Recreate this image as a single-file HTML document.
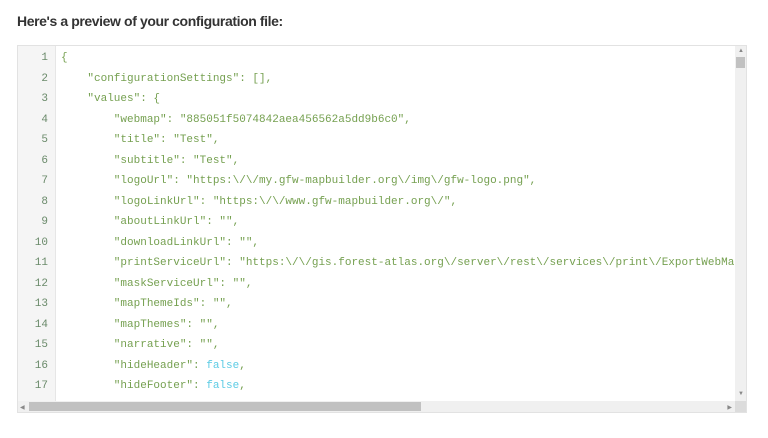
<!DOCTYPE html>
<html><head><style>
body{margin:0;width:768px;height:438px;background:#fff;overflow:hidden;font-family:"Liberation Sans",sans-serif}
h1{position:absolute;left:17px;top:13px;margin:0;font-size:14px;font-weight:bold;color:#333;letter-spacing:-0.4px}
.box{position:absolute;left:17px;top:45px;width:730px;height:368px;border:1px solid #e2e2e2;box-sizing:border-box;overflow:hidden;background:#fff}
.gut{position:absolute;left:0;top:0;width:37px;height:100%;background:#f5f5f5;border-right:1px solid #e6e6e6}
.ln{position:absolute;left:0;width:30px;text-align:right;font-family:"Liberation Mono",monospace;font-size:11px;color:#6a8a6a}
.cd{position:absolute;left:43px;white-space:pre;font-family:"Liberation Mono",monospace;font-size:11px;color:#75a050}
.b{color:#5ccbe4}
.vs{position:absolute;right:0;top:0;width:11px;height:356px;background:#f0f0f0}
.vt{position:absolute;right:1px;top:11px;width:9px;height:11px;background:#c1c1c1}
.hs{position:absolute;left:0;bottom:0;width:718px;height:11px;background:#f0f0f0}
.ht{position:absolute;left:11px;bottom:1px;width:392px;height:9px;background:#c1c1c1}
.cor{position:absolute;right:0;bottom:0;width:11px;height:11px;background:#dcdcdc}
.ar{position:absolute;font-size:6px;color:#888}
</style></head><body>
<h1>Here's a preview of your configuration file:</h1>
<div class="box">
<div class="gut"></div>
<div id="c"></div>
<div class="vs"></div><div class="vt"></div>
<div class="hs"></div><div class="ht"></div><div class="cor"></div>
<div class="ar" style="right:2px;top:2px">▲</div>
<div class="ar" style="right:2px;top:345px">▼</div>
<div class="ar" style="left:2px;bottom:1px">◀</div>
<div class="ar" style="right:14px;bottom:1px">▶</div>
</div>
<script>
var L=['{','    "configurationSettings": [],','    "values": {','        "webmap": "885051f5074842aea456562a5dd9b6c0",','        "title": "Test",','        "subtitle": "Test",','        "logoUrl": "https:\\/\\/my.gfw-mapbuilder.org\\/img\\/gfw-logo.png",','        "logoLinkUrl": "https:\\/\\/www.gfw-mapbuilder.org\\/",','        "aboutLinkUrl": "",','        "downloadLinkUrl": "",','        "printServiceUrl": "https:\\/\\/gis.forest-atlas.org\\/server\\/rest\\/services\\/print\\/ExportWebMap",','        "maskServiceUrl": "",','        "mapThemeIds": "",','        "mapThemes": "",','        "narrative": "",','        "hideHeader": <b>false</b>,','        "hideFooter": <b>false</b>,','        "includeMyGFWLogin": <b>false</b>,'];
var h='';for(var i=0;i<L.length;i++){var t=6+i*20.5;h+='<div class="ln" style="top:'+t+'px">'+(i+1)+'</div><div class="cd" style="top:'+t+'px">'+L[i].replace(/<b>/g,'<span class="b">').replace(/<\/b>/g,'</span>')+'</div>';}
document.getElementById('c').innerHTML=h;
</script>
</body></html>
